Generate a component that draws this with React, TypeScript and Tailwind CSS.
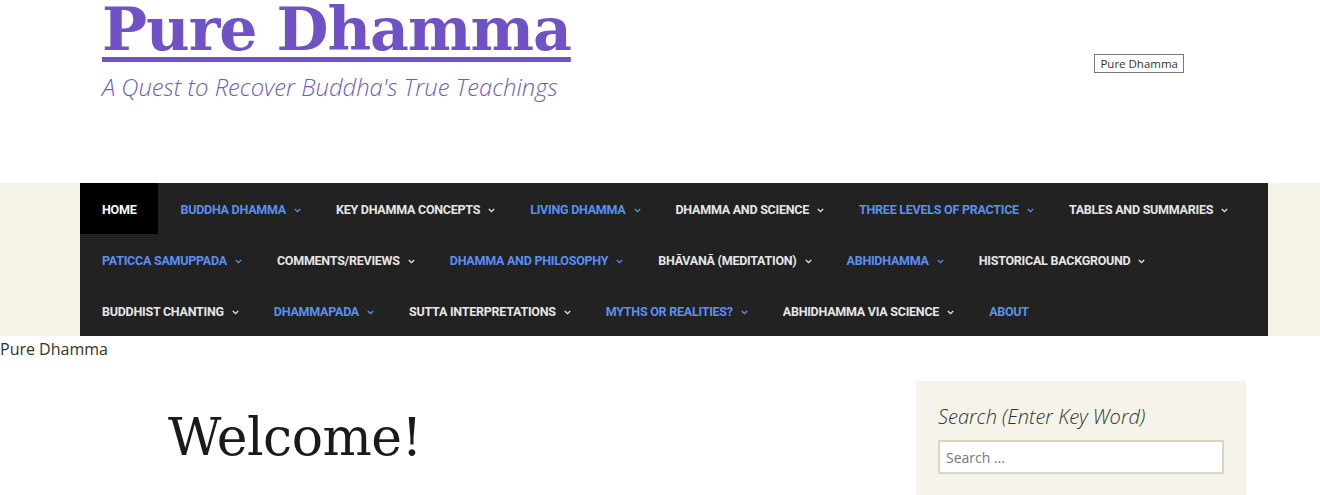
import React from 'react';

type NavItem = { label: string; blue?: boolean; caret?: boolean; active?: boolean };

const rows: NavItem[][] = [
  [
    { label: 'HOME', active: true },
    { label: 'BUDDHA DHAMMA', blue: true, caret: true },
    { label: 'KEY DHAMMA CONCEPTS', caret: true },
    { label: 'LIVING DHAMMA', blue: true, caret: true },
    { label: 'DHAMMA AND SCIENCE', caret: true },
    { label: 'THREE LEVELS OF PRACTICE', blue: true, caret: true },
    { label: 'TABLES AND SUMMARIES', caret: true },
  ],
  [
    { label: 'PATICCA SAMUPPADA', blue: true, caret: true },
    { label: 'COMMENTS/REVIEWS', caret: true },
    { label: 'DHAMMA AND PHILOSOPHY', blue: true, caret: true },
    { label: 'BHĀVANĀ (MEDITATION)', caret: true },
    { label: 'ABHIDHAMMA', blue: true, caret: true },
    { label: 'HISTORICAL BACKGROUND', caret: true },
  ],
  [
    { label: 'BUDDHIST CHANTING', caret: true },
    { label: 'DHAMMAPADA', blue: true, caret: true },
    { label: 'SUTTA INTERPRETATIONS', caret: true },
    { label: 'MYTHS OR REALITIES?', blue: true, caret: true },
    { label: 'ABHIDHAMMA VIA SCIENCE', caret: true },
    { label: 'ABOUT', blue: true },
  ],
];

const Caret = () => (
  <svg width="7" height="5" viewBox="0 0 7 5" className="ml-[8px] mt-[1px] shrink-0" fill="none" stroke="currentColor" strokeWidth="1.3">
    <path d="M0.8 1l2.7 2.7L6.2 1" />
  </svg>
);

const App: React.FC = () => {
  return (
    <div className="min-h-[495px] bg-white overflow-hidden font-['Open_Sans',sans-serif]">
      {/* Header */}
      <header className="h-[183px] flex justify-between">
        <div className="pl-[102px]">
          <a className="block font-['DejaVu_Serif',serif] font-bold text-[60px] leading-[58px] text-[#7051c6] underline decoration-[5px] underline-offset-[7px] tracking-[-1px] whitespace-nowrap">
            Pure Dhamma
          </a>
          <p className="mt-[14px] font-['Open_Sans',sans-serif] font-light italic text-[23.8px] leading-[30px] text-[#6d5eb8] whitespace-nowrap">
            A Quest to Recover Buddha's True Teachings
          </p>
        </div>
        <div className="pr-[136px] pt-[54px]">
          <span className="block border border-[#777] px-[5px] text-[11.5px] leading-[17px] text-[#333] font-['Open_Sans',sans-serif] whitespace-nowrap">
            Pure Dhamma
          </span>
        </div>
      </header>

      {/* Nav */}
      <nav className="bg-[#f5f2e7]">
        <div className="mx-[80px] bg-[#222222] w-[1188px]">
          {rows.map((row, i) => (
            <ul key={i} className="flex h-[51px]">
              {row.map((it) => (
                <li
                  key={it.label}
                  className={`flex items-center whitespace-nowrap pl-[22px] pt-[3px] text-[12.5px] font-bold font-['Roboto',sans-serif] tracking-[-0.25px] ${
                    it.caret ? 'pr-[13px]' : 'pr-[22px]'
                  } ${it.active ? 'bg-black text-white' : it.blue ? 'text-[#5b8ff2]' : 'text-[#e6e6e6]'}`}
                >
                  {it.label}
                  {it.caret && <Caret />}
                </li>
              ))}
            </ul>
          ))}
        </div>
      </nav>

      <div className="text-[16px] leading-[24px] text-[#333] pt-[1px] font-['Open_Sans',sans-serif]">Pure Dhamma</div>

      {/* Content */}
      <div className="flex pt-[20px]">
        <main className="pl-[168px] pt-[26px] flex-1">
          <h1 className="font-['DejaVu_Serif',serif] text-[52px] leading-[60px] text-[#1a1a1a] tracking-[-0.5px]">Welcome!</h1>
        </main>
        <aside className="w-[330px] mr-[74px] bg-[#f6f4ea] px-[22px] pt-[22px] pb-[20px] h-[120px]">
          <h2 className="font-['Open_Sans',sans-serif] font-light italic text-[20px] leading-[28px] text-[#333]">
            Search (Enter Key Word)
          </h2>
          <input
            type="search"
            placeholder="Search …"
            className="mt-[9px] w-[286px] h-[34px] bg-white border-2 border-[#d9d6c4] px-[6px] text-[14px] placeholder:text-[#777] outline-none"
          />
        </aside>
      </div>
    </div>
  );
};

export default App;
